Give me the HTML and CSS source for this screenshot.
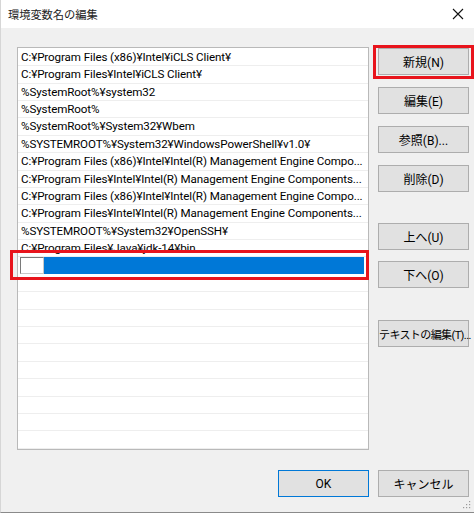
FILE: index.html
```html
<!DOCTYPE html>
<html lang="ja">
<head>
<meta charset="utf-8">
<title>環境変数名の編集</title>
<link rel="stylesheet" href="styles.css">
</head>
<body>
<div class="window">
  <div class="titlebar">
    <span class="title">環境変数名の編集</span>
    <svg class="close" width="12" height="12" viewBox="0 0 12 12"><path d="M1 1 L11 11 M11 1 L1 11" stroke="#111" stroke-width="1.1" fill="none"/></svg>
  </div>
  <div class="content">
    <div class="main">
      <div class="list">
        <div class="row">C:¥Program Files (x86)¥Intel¥iCLS Client¥</div>
        <div class="row">C:¥Program Files¥Intel¥iCLS Client¥</div>
        <div class="row">%SystemRoot%¥system32</div>
        <div class="row">%SystemRoot%</div>
        <div class="row">%SystemRoot%¥System32¥Wbem</div>
        <div class="row">%SYSTEMROOT%¥System32¥WindowsPowerShell¥v1.0¥</div>
        <div class="row">C:¥Program Files (x86)¥Intel¥Intel(R) Management Engine Compo...</div>
        <div class="row">C:¥Program Files¥Intel¥Intel(R) Management Engine Components...</div>
        <div class="row">C:¥Program Files (x86)¥Intel¥Intel(R) Management Engine Compo...</div>
        <div class="row">C:¥Program Files¥Intel¥Intel(R) Management Engine Components...</div>
        <div class="row">%SYSTEMROOT%¥System32¥OpenSSH¥</div>
        <div class="row">C:¥Program Files¥Java¥jdk-14¥bin</div>
        <div class="row selected"><span class="editbox"></span><span class="highlight"></span></div>
        <div class="row"></div>
        <div class="row"></div>
        <div class="row"></div>
        <div class="row"></div>
        <div class="row"></div>
        <div class="row"></div>
        <div class="row"></div>
        <div class="row"></div>
        <div class="row"></div>
        <div class="row"></div>
        <div class="row"></div>
      </div>
      <div class="buttons">
        <button class="btn b-new">新規(N)</button>
        <button class="btn b-edit">編集(E)</button>
        <button class="btn b-browse">参照(B)...</button>
        <button class="btn b-del">削除(D)</button>
        <button class="btn b-up">上へ(U)</button>
        <button class="btn b-down">下へ(O)</button>
        <button class="btn b-text">テキストの編集(T)...</button>
      </div>
    </div>
    <div class="footer">
      <button class="btn ok">OK</button>
      <button class="btn">キャンセル</button>
    </div>
    <svg class="grip" width="8" height="8" viewBox="0 0 8 8">
      <rect x="6" y="0" width="1.2" height="1.2" fill="#9a9a9a"/>
      <rect x="6" y="3" width="1.2" height="1.2" fill="#9a9a9a"/>
      <rect x="3" y="3" width="1.2" height="1.2" fill="#9a9a9a"/>
      <rect x="6" y="6" width="1.2" height="1.2" fill="#9a9a9a"/>
      <rect x="3" y="6" width="1.2" height="1.2" fill="#9a9a9a"/>
      <rect x="0" y="6" width="1.2" height="1.2" fill="#9a9a9a"/>
    </svg>
  </div>
  <div class="mark mark-row"></div>
  <div class="mark mark-new"></div>
</div>
</body>
</html>
```

FILE: styles.css
```css
* { box-sizing: border-box; }
html, body {
  margin: 0;
  padding: 0;
  width: 474px;
  height: 513px;
  overflow: hidden;
  background: #f0f0f0;
  font-family: Roboto, "Noto Sans CJK JP", sans-serif;
  color: #000;
}
.window {
  position: relative;
  width: 474px;
  height: 513px;
  display: flex;
  flex-direction: column;
  border-left: 1px solid #d6d6d6;
  border-bottom: 1px solid #8a8a8a;
}
.titlebar {
  height: 28px;
  background: #fff;
  display: flex;
  align-items: center;
  justify-content: space-between;
  padding: 0 10px 0 7px;
}
.title {
  font-family: "Noto Sans CJK JP", sans-serif;
  font-size: 11.3px;
  color: #222;
  letter-spacing: -0.1px;
}
.close { display: block; }
.content {
  position: relative;
  flex: 1;
  display: flex;
  flex-direction: column;
  padding: 19px 4px 0 16px;
}
.main {
  display: flex;
  gap: 9px;
}
.list {
  width: 352px;
  height: 403px;
  background: #fff;
  border: 1px solid #b9b9b9;
  overflow: hidden;
  padding-top: 0.8px;
}
.row {
  height: 17.4px;
  line-height: 16.4px;
  border-bottom: 1px solid #eeeeee;
  padding-left: 3px;
  font-family: Roboto, "Noto Sans CJK JP", sans-serif;
  font-size: 11.6px;
  letter-spacing: -0.1px;
  white-space: nowrap;
  overflow: hidden;
}
.row.selected {
  display: flex;
  padding: 0 4px 0 2px;
  border-bottom-color: #fff;
}
.editbox {
  width: 24px;
  height: 17px;
  background: #fff;
  border: 1px solid #7a7a7a;
  border-right-color: #c8c8c8;
  border-bottom-color: #c8c8c8;
}
.highlight {
  flex: 1;
  height: 16.4px;
  background: #0078d7;
}
.buttons {
  display: flex;
  flex-direction: column;
  padding-top: 1px;
}
.btn {
  width: 91px;
  height: 27px;
  background: #e1e1e1;
  border: 1px solid #adadad;
  font-family: Roboto, "Noto Sans CJK JP", sans-serif;
  font-size: 12px;
  color: #000;
  padding: 0;
  white-space: nowrap;
}
.b-edit, .b-browse, .b-del { margin-top: 12px; }
.b-up { margin-top: 31px; }
.b-down { margin-top: 11px; }
.b-text { margin-top: 32px; font-size: 11px; letter-spacing: -0.6px; }
.footer {
  display: flex;
  justify-content: flex-end;
  gap: 9px;
  margin-top: 20px;
  padding-right: 1px;
}
.ok { border-color: #0078d7; }
.grip {
  position: absolute;
  right: 3px;
  bottom: 3px;
}
.mark {
  position: absolute;
  border: 3px solid #e8141c;
}
.mark-row {
  left: 9px;
  top: 250px;
  width: 359px;
  height: 30px;
}
.mark-new {
  left: 372px;
  top: 45px;
  width: 101px;
  height: 34px;
}
```
